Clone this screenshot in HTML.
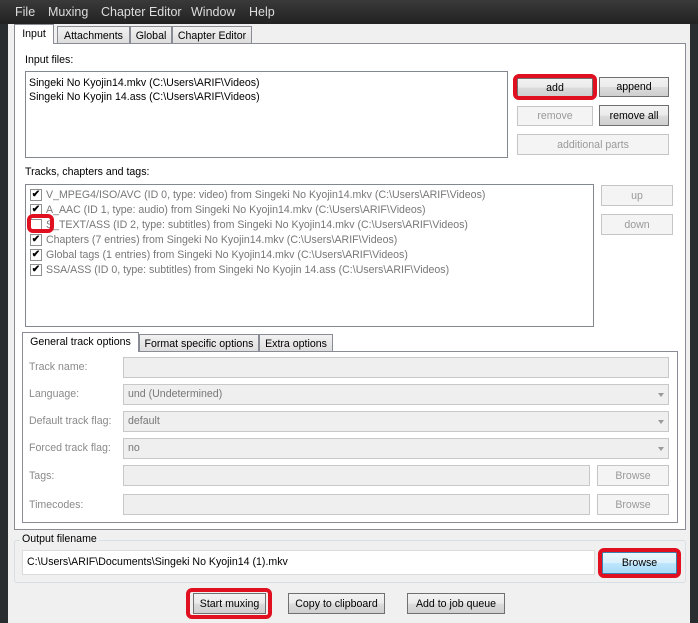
<!DOCTYPE html><html><head><style>
*{box-sizing:border-box;margin:0;padding:0}
body{width:698px;height:623px;overflow:hidden;background:#2a2d30;font-family:"Liberation Sans",sans-serif;font-size:10.6px;color:#000;position:relative}
.a{position:absolute;white-space:nowrap}
.menu{left:0;top:0;width:698px;height:24px;background:linear-gradient(#3a3a3a,#222);color:#ddd;font-size:12.5px}
.menu span{position:absolute;top:5px}
.c{left:8px;top:24px;width:682px;height:599px;background:#f0f0f0}
.box{position:absolute;background:#fff;border:1px solid #828790;white-space:nowrap}
.btn{position:absolute;border:1px solid #707070;background:linear-gradient(#f2f2f2,#ebebeb 50%,#dcdcdc 51%,#cfcfcf);text-align:center;display:flex;align-items:center;justify-content:center;white-space:nowrap}
.dis{border-color:#c5c5c5;background:#f4f4f4;color:#9a9a9a}
.tab{position:absolute;border:1px solid #898c95;border-bottom:none;background:linear-gradient(#f2f2f2,#dcdcdc);padding:3px 0 0;height:18px;text-align:center;white-space:nowrap;overflow:hidden}
.tab.on{background:#fff;height:20px;z-index:2}
.pan{position:absolute;border:1px solid #898c95;background:#fff}
.lbl{position:absolute;color:#8a8a8a;white-space:nowrap}
.inp{position:absolute;border:1px solid #c8c8c8;background:#efefef;color:#777;padding:3px 4px;height:21px}
.ar{position:absolute;right:4px;top:8px;border:3px solid transparent;border-top:4px solid #999}
.red{position:absolute;border:4px solid #e01020;border-radius:6px}
.tr{position:absolute;left:4px;color:#777;white-space:nowrap;display:flex;align-items:center;height:15px}
.cb{width:12px;height:12px;border:1px solid #8e8f8f;background:#fff;font-size:10px;line-height:10px;text-align:center;color:#000;font-weight:bold;margin-right:4px;flex:none}
</style></head><body>
<div class="a menu"><span style="left:15px">File</span><span style="left:48px">Muxing</span><span style="left:101px">Chapter Editor</span><span style="left:191px">Window</span><span style="left:249px">Help</span></div>
<div class="a c"></div>
<div class="tab on" style="left:14px;top:24px;width:40px">Input</div>
<div class="tab" style="left:57px;top:26px;width:73px">Attachments</div>
<div class="tab" style="left:130px;top:26px;width:42px">Global</div>
<div class="tab" style="left:172px;top:26px;width:80px">Chapter Editor</div>
<div class="pan" style="left:14px;top:43px;width:672px;height:487px"></div>
<div class="a" style="left:25px;top:54px">Input files:</div>
<div class="box" style="left:25px;top:71px;width:483px;height:87px;padding:4px 3px;line-height:14px">Singeki No Kyojin14.mkv (C:\Users\ARIF\Videos)<br>Singeki No Kyojin 14.ass (C:\Users\ARIF\Videos)</div>
<div class="btn" style="left:517px;top:78px;width:76px;height:19px">add</div>
<div class="btn" style="left:599px;top:77px;width:70px;height:20px">append</div>
<div class="btn dis" style="left:517px;top:106px;width:76px;height:20px">remove</div>
<div class="btn" style="left:599px;top:105px;width:70px;height:21px">remove all</div>
<div class="btn dis" style="left:517px;top:134px;width:152px;height:21px">additional parts</div>
<div class="a" style="left:25px;top:166px">Tracks, chapters and tags:</div>
<div class="box" style="left:25px;top:184px;width:569px;height:143px">
<div class="tr" style="top:2px"><span class="cb">✔</span>V_MPEG4/ISO/AVC (ID 0, type: video) from Singeki No Kyojin14.mkv (C:\Users\ARIF\Videos)</div>
<div class="tr" style="top:17px"><span class="cb">✔</span>A_AAC (ID 1, type: audio) from Singeki No Kyojin14.mkv (C:\Users\ARIF\Videos)</div>
<div class="tr" style="top:32px"><span class="cb"></span>S_TEXT/ASS (ID 2, type: subtitles) from Singeki No Kyojin14.mkv (C:\Users\ARIF\Videos)</div>
<div class="tr" style="top:47px"><span class="cb">✔</span>Chapters (7 entries) from Singeki No Kyojin14.mkv (C:\Users\ARIF\Videos)</div>
<div class="tr" style="top:62px"><span class="cb">✔</span>Global tags (1 entries) from Singeki No Kyojin14.mkv (C:\Users\ARIF\Videos)</div>
<div class="tr" style="top:77px"><span class="cb">✔</span>SSA/ASS (ID 0, type: subtitles) from Singeki No Kyojin 14.ass (C:\Users\ARIF\Videos)</div>
</div>
<div class="btn dis" style="left:601px;top:185px;width:72px;height:21px">up</div>
<div class="btn dis" style="left:601px;top:214px;width:72px;height:21px">down</div>
<div class="tab on" style="left:22px;top:332px;width:117px">General track options</div>
<div class="tab" style="left:139px;top:334px;width:120px">Format specific options</div>
<div class="tab" style="left:259px;top:334px;width:74px">Extra options</div>
<div class="pan" style="left:22px;top:351px;width:656px;height:172px"></div>
<div class="lbl" style="left:29px;top:361px">Track name:</div><div class="inp" style="left:123px;top:357px;width:546px"></div>
<div class="lbl" style="left:29px;top:388px">Language:</div><div class="inp" style="left:123px;top:384px;width:546px">und (Undetermined)<i class="ar"></i></div>
<div class="lbl" style="left:29px;top:415px">Default track flag:</div><div class="inp" style="left:123px;top:411px;width:546px">default<i class="ar"></i></div>
<div class="lbl" style="left:29px;top:442px">Forced track flag:</div><div class="inp" style="left:123px;top:438px;width:546px">no<i class="ar"></i></div>
<div class="lbl" style="left:29px;top:470px">Tags:</div><div class="inp" style="left:123px;top:465px;width:467px"></div>
<div class="btn dis" style="left:597px;top:465px;width:72px;height:21px">Browse</div>
<div class="lbl" style="left:29px;top:499px">Timecodes:</div><div class="inp" style="left:123px;top:494px;width:467px"></div>
<div class="btn dis" style="left:597px;top:494px;width:72px;height:21px">Browse</div>
<div class="a" style="left:14px;top:540px;width:672px;height:43px;border:1px solid #d5dfe5;border-radius:3px"></div>
<div class="a" style="left:20px;top:533px;background:#f0f0f0;padding:0 2px">Output filename</div>
<div class="box" style="left:22px;top:550px;width:573px;height:25px;border-color:#dcdcdc;padding:5px 4px">C:\Users\ARIF\Documents\Singeki No Kyojin14 (1).mkv</div>
<div class="btn" style="left:602px;top:552px;width:75px;height:22px;background:linear-gradient(#eaf6fd,#d9f0fc 50%,#bee6fd 51%,#a7d9f5);border-color:#3c7fb1">Browse</div>
<div class="btn" style="left:193px;top:593px;width:73px;height:21px">Start muxing</div>
<div class="btn" style="left:288px;top:593px;width:97px;height:21px">Copy to clipboard</div>
<div class="btn" style="left:407px;top:593px;width:98px;height:21px">Add to job queue</div>
<div class="red" style="left:513px;top:74px;width:84px;height:26px"></div>
<div class="red" style="left:27px;top:214px;width:27px;height:19px"></div>
<div class="red" style="left:598px;top:548px;width:83px;height:30px"></div>
<div class="red" style="left:186px;top:588px;width:86px;height:31px"></div>
</body></html>
